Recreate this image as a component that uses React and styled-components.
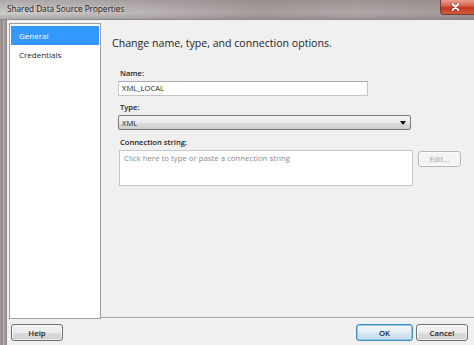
import React from "react";
import styled, { createGlobalStyle } from "styled-components";

const Global = createGlobalStyle`
  html, body { margin: 0; padding: 0; }
  body { width: 474px; height: 345px; overflow: hidden; background: #f0f0f0; }
  * { box-sizing: border-box; }
`;

const Window = styled.div`
  width: 474px;
  height: 345px;
  display: flex;
  flex-direction: column;
  font-family: "Open Sans", "Noto Sans", sans-serif;
  color: #1e1e1e;
`;

const TitleBar = styled.div`
  height: 20px;
  flex: 0 0 20px;
  display: flex;
  align-items: flex-start;
  background:
    linear-gradient(180deg, rgba(120,110,110,0.35) 0%, rgba(255,255,255,0) 70%, rgba(90,85,85,0.25) 100%),
    linear-gradient(90deg, #cdc9c9 0%, #bdb7b7 30%, #a79e9e 55%, #b0a8a8 75%, #a39a9a 100%);
  border-bottom: 1px solid #8d8787;
`;

const Title = styled.span`
  flex: 1;
  font-size: 8.2px;
  line-height: 18px;
  padding-left: 7px;
  color: #141414;
  text-shadow: 0 0 3px rgba(255,255,255,0.8);
`;

const CloseButton = styled.div`
  width: 34px;
  min-width: 34px;
  height: 15px;
  display: flex;
  align-items: center;
  justify-content: center;
  padding-right: 4px;
  background: linear-gradient(180deg, #e89c8c 0%, #da6650 40%, #c4381e 55%, #d35a40 100%);
  border-left: 1px solid #7a3b33;
  border-bottom: 1px solid #7a3b33;
  border-radius: 0 0 0 4px;
`;

const Body = styled.div`
  flex: 1;
  display: flex;
  min-height: 0;
`;

const FrameEdge = styled.div`
  width: 7px;
  flex: 0 0 7px;
  background: linear-gradient(90deg, #a89e9c 0%, #8e8482 30%, #b2a9a7 60%, #9b918f 100%);
  border-right: 1px solid #8a8a8a;
`;

const Content = styled.div`
  flex: 1;
  display: flex;
  flex-direction: column;
  background: #f0f0f0;
`;

const Main = styled.div`
  display: flex;
  height: 299px;
  padding: 3px 0 0 2px;
`;

const Nav = styled.div`
  width: 92px;
  height: 296px;
  background: #fff;
  border: 1px solid #9f9f9f;
  padding: 2px 1px;
  display: flex;
  flex-direction: column;
`;

const NavItem = styled.div`
  height: 19px;
  line-height: 19px;
  padding-left: 8px;
  font-size: 8px;
  background: ${p => (p.$active ? "#3399ff" : "transparent")};
  color: ${p => (p.$active ? "#ffffff" : "#1e1e1e")};
`;

const Panel = styled.div`
  flex: 1;
  display: flex;
  flex-direction: column;
  padding: 11px 0 0 11px;
  border-bottom: 1px solid #a0a0a0;
  box-shadow: 0 1px 0 #ffffff;
  margin-bottom: 1px;
`;

const Heading = styled.div`
  font-size: 10.6px;
  line-height: 18px;
  color: #1e1e1e;
  margin-bottom: 15px;
`;

const Form = styled.div`
  display: flex;
  flex-direction: column;
  padding-left: 6px;
`;

const Label = styled.div`
  font-size: 7.6px;
  font-weight: 600;
  line-height: 12px;
  padding-left: 2px;
  margin-bottom: 2px;
  color: #1e1e1e;
`;

const TextInput = styled.div`
  width: 250px;
  height: 15px;
  border: 1px solid #c2c4c8;
  border-top-color: #abadb3;
  background: #fff;
  font-size: 7.6px;
  line-height: 13px;
  padding-left: 3px;
  margin-bottom: 5px;
`;

const Select = styled.div`
  width: 293px;
  height: 15px;
  border: 1px solid #7a7a7a;
  border-radius: 2px;
  background: linear-gradient(180deg, #f3f3f3 0%, #ebebeb 50%, #dddddd 51%, #cfcfcf 100%);
  display: flex;
  justify-content: space-between;
  align-items: center;
  font-size: 7.6px;
  padding: 0 3px 0 3px;
  margin-bottom: 6px;
`;

const Arrow = styled.span`
  width: 0;
  height: 0;
  border-left: 3px solid transparent;
  border-right: 3px solid transparent;
  border-top: 4px solid #111;
  margin-right: 1px;
`;

const ConnRow = styled.div`
  display: flex;
  align-items: flex-start;
  gap: 5px;
`;

const TextArea = styled.div`
  width: 294px;
  height: 36px;
  margin-left: 1px;
  border: 1px solid #c6c8cc;
  background: #fff;
  font-size: 7.8px;
  line-height: 12px;
  padding: 1px 4px;
  color: #8a8a8a;
`;

const Button = styled.div`
  width: ${p => p.$w || 52}px;
  height: ${p => p.$h || 17}px;
  display: flex;
  align-items: center;
  justify-content: center;
  border: 1px solid ${p => (p.$disabled ? "#b5b8bb" : p.$focus ? "#3c8cc4" : "#707070")};
  border-radius: 3px;
  background: ${p =>
    p.$disabled
      ? "#f4f4f4"
      : p.$focus
      ? "linear-gradient(180deg, #f2f7fb 0%, #e4eef6 50%, #d6e5f1 51%, #c8dcec 100%)"
      : "linear-gradient(180deg, #f4f4f4 0%, #ebebeb 50%, #dddddd 51%, #cfcfcf 100%)"};
  box-shadow: ${p => (p.$focus ? "inset 0 0 0 1px #8ecbee" : "inset 0 0 0 1px rgba(255,255,255,0.6)")};
  font-size: 7.8px;
  font-weight: ${p => (p.$disabled ? 400 : 600)};
  color: ${p => (p.$disabled ? "#a3a3a3" : "#1e1e1e")};
  margin-top: ${p => p.$mt || 0}px;
`;

const Footer = styled.div`
  flex: 1;
  display: flex;
  align-items: flex-start;
  padding: 5px 6px 0 4px;
`;

const Spacer = styled.div`
  flex: 1;
`;

const FooterRight = styled.div`
  display: flex;
  gap: 3px;
`;

export default function App() {
  return (
    <>
      <Global />
      <Window>
        <TitleBar>
          <Title>Shared Data Source Properties</Title>
          <CloseButton>
            <svg width="9" height="8" viewBox="0 0 9 8">
              <path d="M1.5 1 L7.5 7 M7.5 1 L1.5 7" stroke="#4a1a12" strokeWidth="3" strokeLinecap="round" opacity="0.5" />
              <path d="M1.5 1 L7.5 7 M7.5 1 L1.5 7" stroke="#ffffff" strokeWidth="1.8" strokeLinecap="round" />
            </svg>
          </CloseButton>
        </TitleBar>
        <Body>
          <FrameEdge />
          <Content>
            <Main>
              <Nav>
                <NavItem $active>General</NavItem>
                <NavItem>Credentials</NavItem>
              </Nav>
              <Panel>
                <Heading>Change name, type, and connection options.</Heading>
                <Form>
                  <Label>Name:</Label>
                  <TextInput>XML_LOCAL</TextInput>
                  <Label>Type:</Label>
                  <Select>
                    <span>XML</span>
                    <Arrow />
                  </Select>
                  <Label>Connection string:</Label>
                  <ConnRow>
                    <TextArea>Click here to type or paste a connection string</TextArea>
                    <Button $disabled $w={43} $h={16} $mt={1}>Edit...</Button>
                  </ConnRow>
                </Form>
              </Panel>
            </Main>
            <Footer>
              <Button>Help</Button>
              <Spacer />
              <FooterRight>
                <Button $w={57} $focus>OK</Button>
                <Button $w={52}>Cancel</Button>
              </FooterRight>
            </Footer>
          </Content>
        </Body>
      </Window>
    </>
  );
}
